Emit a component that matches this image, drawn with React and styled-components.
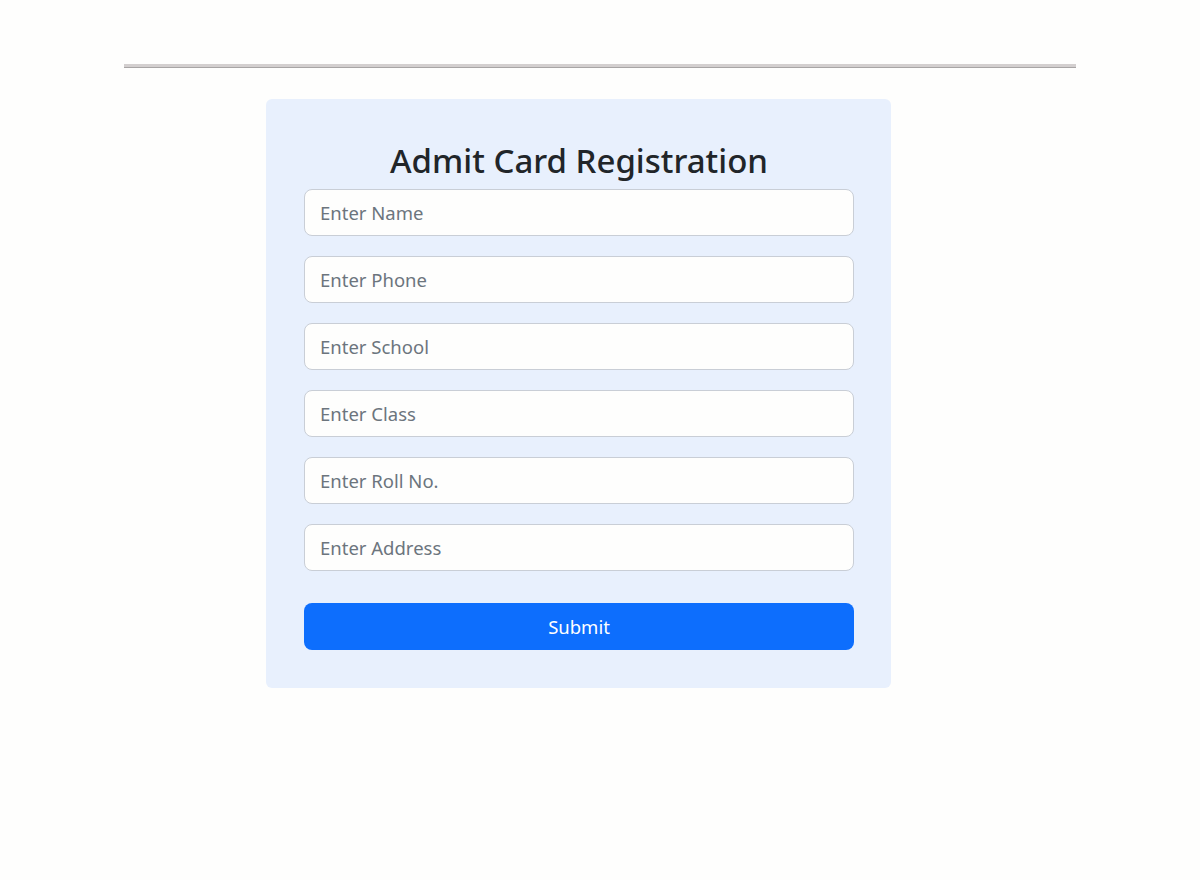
import React from 'react';
import styled, { createGlobalStyle } from 'styled-components';

const GlobalStyle = createGlobalStyle`
  * {
    box-sizing: border-box;
  }
  body {
    margin: 0;
    background: #fefefd;
    font-family: 'Noto Sans', 'Open Sans', sans-serif;
    color: #212529;
  }
`;

const fields = [
  'Enter Name',
  'Enter Phone',
  'Enter School',
  'Enter Class',
  'Enter Roll No.',
  'Enter Address',
];

const App = () => {
  return (
    <Page>
      <GlobalStyle />
      <Rule />
      <Card>
        <Title>Admit Card Registration</Title>
        <Form onSubmit={(e) => e.preventDefault()}>
          {fields.map((f) => (
            <Input key={f} type="text" placeholder={f} />
          ))}
          <Button type="submit">Submit</Button>
        </Form>
      </Card>
    </Page>
  );
};

const Page = styled.div`
  width: 952px;
  margin: 0 auto;
  padding-top: 64px;
  min-height: 880px;
`;

const Rule = styled.div`
  height: 4px;
  background: #d3cfcf;
  border-bottom: 1px solid #a8a5a5;
  margin-bottom: 31px;
`;

const Card = styled.div`
  width: 625px;
  margin-left: 142px;
  background: #e8f0fd;
  border-radius: 6px;
  padding: 42px 37px 38px 38px;
`;

const Title = styled.h2`
  margin: 0 0 8px;
  text-align: center;
  font-size: 33px;
  font-weight: 500;
  line-height: 1.2;
  color: #212529;
`;

const Form = styled.form`
  display: flex;
  flex-direction: column;
  gap: 20px;
`;

const Input = styled.input`
  display: block;
  width: 100%;
  height: 47px;
  padding: 0 15px;
  font-family: inherit;
  font-size: 18.5px;
  color: #212529;
  background: #fefefd;
  border: 1px solid #c9ced6;
  border-radius: 8px;
  outline: none;
  &::placeholder {
    color: #6c757d;
  }
`;

const Button = styled.button`
  margin-top: 12px;
  height: 47px;
  width: 100%;
  background: #0d6efd;
  color: #fff;
  border: none;
  border-radius: 8px;
  font-family: inherit;
  font-size: 18.5px;
  cursor: pointer;
`;

export default App;
